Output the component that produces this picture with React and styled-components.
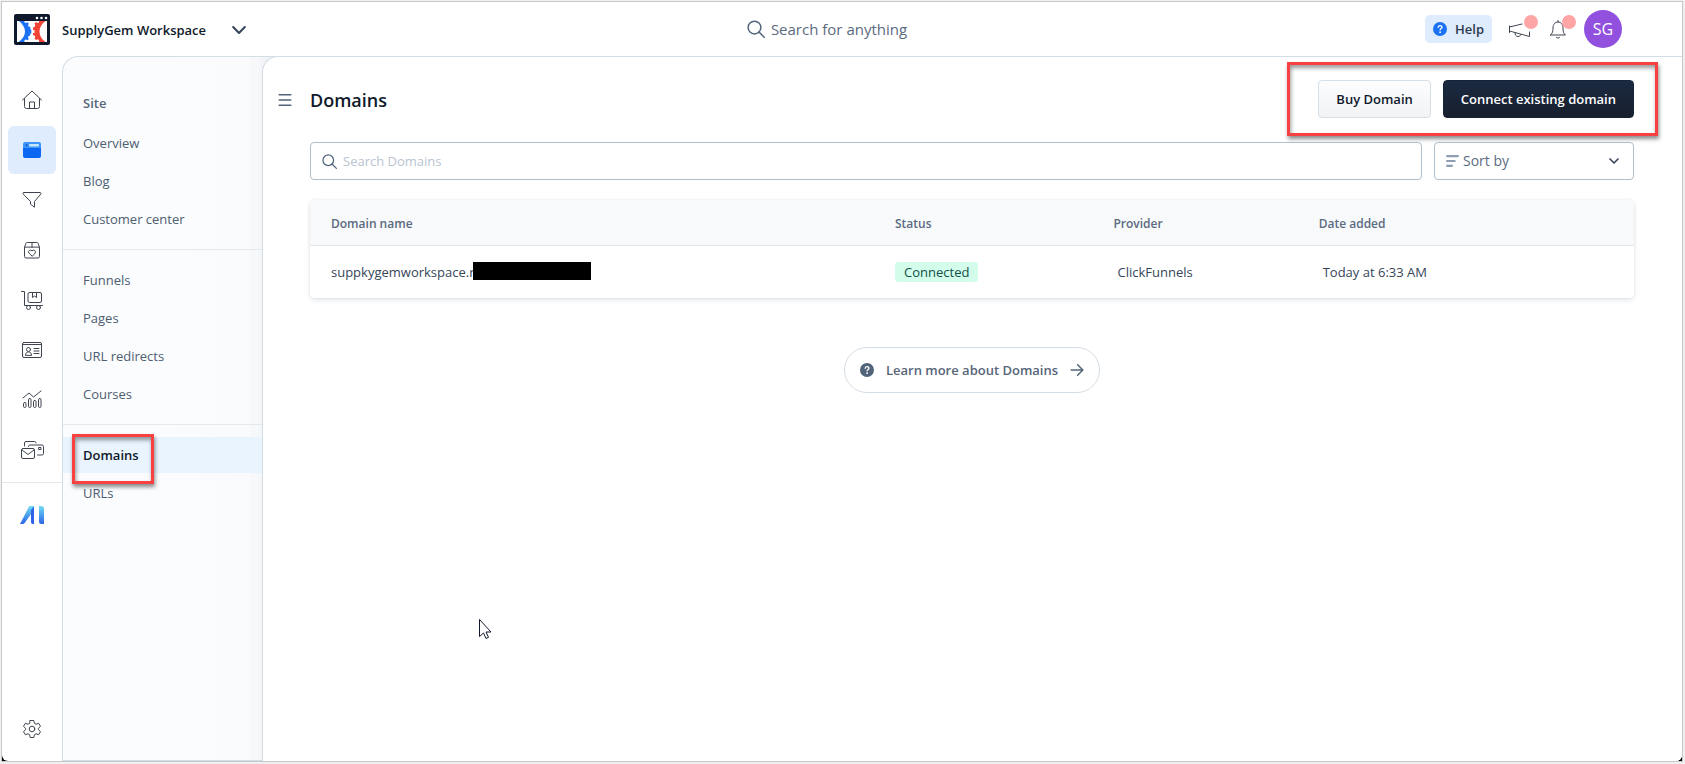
import React from "react";
import styled, { createGlobalStyle } from "styled-components";

const GlobalStyle = createGlobalStyle`
  * {
    box-sizing: border-box;
  }
  body {
    margin: 0;
    background: #f0f0f0;
    color: #364559;
    font-family: "Open Sans", "Noto Sans", sans-serif;
    font-size: 13px;
    line-height: 20px;
  }
  button, input, select {
    font: inherit;
    color: inherit;
  }
  button {
    cursor: pointer;
  }
  a {
    color: inherit;
    text-decoration: none;
  }
  svg {
    display: block;
    flex: none;
  }
`;

const Page = styled.div`
  display: flex;
  min-height: 100vh;
  padding: 1px 2px 2px 1px;
`;

const Frame = styled.div`
  position: relative;
  flex: 1;
  display: flex;
  border: 1px solid #c6c8ca;
  background: #000;
`;

const Window = styled.div`
  flex: 1;
  display: flex;
  flex-direction: column;
  background: #fff;
  border-radius: 0 0 6px 6px;
  overflow: hidden;
`;

const TopBar = styled.header`
  display: flex;
  align-items: center;
  height: 54px;
  padding: 0 60px 0 12px;
`;

const TopLeft = styled.div`
  flex: 1;
  display: flex;
  align-items: center;
  padding-top: 2px;
`;

const WorkspaceButton = styled.button`
  display: flex;
  align-items: center;
  gap: 26px;
  padding: 0 12px;
  border: 0;
  background: none;
  color: #10192b;
  font-weight: 600;
`;

const GlobalSearch = styled.button`
  display: flex;
  align-items: center;
  gap: 6px;
  padding: 0 0 0 18px;
  border: 0;
  background: none;
  color: #5b6b80;
  font-size: 15px;
`;

const TopRight = styled.div`
  flex: 1;
  display: flex;
  align-items: center;
  justify-content: flex-end;
`;

const HelpButton = styled.button`
  display: flex;
  align-items: center;
  gap: 8px;
  height: 28px;
  margin-right: 16px;
  padding: 0 8px;
  border: 0;
  border-radius: 5px;
  background: #deecfd;
  color: #2b3a50;
  font-weight: 600;
`;

const IconButton = styled.button`
  position: relative;
  display: flex;
  align-items: center;
  justify-content: center;
  width: 24px;
  height: 28px;
  margin-right: 14px;
  padding: 0;
  border: 0;
  background: none;
`;

const Dot = styled.span`
  position: absolute;
  top: 0;
  right: -6px;
  width: 14px;
  height: 14px;
  border-radius: 50%;
  background: #ffa5a5;
`;

const Avatar = styled.button`
  width: 38px;
  height: 38px;
  padding: 0;
  border: 0;
  border-radius: 50%;
  background: #9150dd;
  color: #fff;
  font-size: 16px;
`;

const Body = styled.div`
  flex: 1;
  display: flex;
`;

const Rail = styled.nav`
  display: flex;
  flex-direction: column;
  gap: 2px;
  width: 60px;
  padding: 20px 0 8px;
`;

const RailLink = styled.a`
  display: flex;
  align-items: center;
  justify-content: center;
  height: 48px;
  margin: 0 6px;
  border-radius: 6px;
  background: ${(props) => (props.$active ? "#deecfd" : "transparent")};
`;

const RailDivider = styled.hr`
  width: 100%;
  margin: 6px 0;
  border: 0;
  border-top: 1px solid #e1e8ee;
`;

const RailBottom = styled.div`
  margin-top: auto;
`;

const Shell = styled.div`
  flex: 1;
  display: flex;
  border: 1px solid #d3dde4;
  border-right: 0;
  border-radius: 16px 0 0 0;
  background: linear-gradient(
    to right,
    #fbfcfd 0,
    #fafbfc 186px,
    #f6f8fa 188px,
    #f6f8fa 195px,
    #f1f3f6 200px
  );
`;

const SideNav = styled.nav`
  width: 199px;
  padding-top: 28px;
`;

const SideTitle = styled.h2`
  margin: 0 0 4px;
  padding: 8px 20px;
  font-size: 13px;
  font-weight: 600;
  line-height: 20px;
  color: #56667b;
`;

const SideGroup = styled.ul`
  display: flex;
  flex-direction: column;
  gap: 2px;
  margin: 0;
  padding: 0 0 12px;
  list-style: none;

  & + & {
    padding-top: 12px;
    border-top: 1px solid #e3e9ee;
  }
`;

const SideItem = styled.li`
  position: relative;
`;

const SideLink = styled.a`
  display: block;
  padding: 8px 20px;
  background: ${(props) => (props.$active ? "#e9f4fe" : "transparent")};
  color: ${(props) => (props.$active ? "#10192b" : "#4d5d72")};
  font-weight: ${(props) => (props.$active ? 600 : 400)};
`;

const Callout = styled.span`
  position: absolute;
  z-index: 1;
  border: 3px solid #f94141;
  box-shadow:
    1px 3px 4px rgba(0, 0, 0, 0.45),
    inset 1px 3px 4px rgba(0, 0, 0, 0.4);
  pointer-events: none;
`;

const SideCallout = styled(Callout)`
  top: -3px;
  bottom: -11px;
  left: 9px;
  width: 82px;
`;

const ActionsCallout = styled(Callout)`
  top: -18px;
  right: -24px;
  bottom: -18px;
  left: -31px;
`;

const Main = styled.main`
  flex: 1;
  margin: -1px 0;
  padding: 23px 48px 40px 15px;
  border: 1px solid #d3dde4;
  border-right: 0;
  border-bottom: 0;
  border-radius: 16px 0 0 0;
  background: #fff;
`;

const PageHead = styled.div`
  display: flex;
  align-items: center;
  gap: 18px;
`;

const MenuButton = styled.button`
  padding: 2px 0 0;
  border: 0;
  background: none;
`;

const Title = styled.h1`
  flex: 1;
  margin: 0;
  padding-top: 2px;
  color: #10192b;
  font-size: 18px;
  font-weight: 600;
  line-height: 28px;
`;

const Actions = styled.div`
  position: relative;
  display: flex;
  gap: 12px;
`;

const Button = styled.button`
  height: 38px;
  padding: 0 17px;
  border: 1px solid ${(props) => (props.$dark ? "#172336" : "#d5dfe8")};
  border-radius: 4px;
  background: ${(props) =>
    props.$dark
      ? "linear-gradient(#1b2a41, #171f2d)"
      : "linear-gradient(#fdfdfe, #f1f3f5)"};
  color: ${(props) => (props.$dark ? "#fff" : "#10192b")};
  font-weight: 600;
`;

const Content = styled.div`
  padding: 24px 0 0 32px;
`;

const Filters = styled.div`
  display: flex;
  gap: 12px;
`;

const Field = styled.label`
  display: flex;
  align-items: center;
  gap: 4px;
  height: 38px;
  padding: 0 11px;
  border: 1px solid #afbfcc;
  border-radius: 4px;
  background: #fff;
`;

const SearchField = styled(Field)`
  flex: 1;
`;

const SortField = styled(Field)`
  width: 200px;
`;

const SearchInput = styled.input`
  flex: 1;
  padding: 0 2px;
  border: 0;
  outline: 0;

  &::placeholder {
    color: #b9c4d0;
  }
`;

const SortSelect = styled.select`
  flex: 1;
  appearance: none;
  border: 0;
  outline: 0;
  background: none;
  color: #5b6b80;
  font-size: 14px;
`;

const DomainTable = styled.table`
  width: 100%;
  margin-top: 20px;
  border-spacing: 0;
  table-layout: fixed;
  border-radius: 4px;
  background: #fff;
  box-shadow:
    0 0 3px rgba(30, 50, 80, 0.12),
    0 3px 5px rgba(30, 50, 80, 0.08);
`;

const Th = styled.th`
  width: ${(props) => props.$width};
  height: 46px;
  padding: 2px 21px 0;
  border-bottom: 1px solid #e3e9ef;
  background: #f7f9fb;
  color: #5b6b80;
  font-size: 12px;
  font-weight: 600;
  text-align: left;
`;

const Td = styled.td`
  height: 52px;
  padding: 0 ${(props) => (props.$indent ? "25px" : "21px")};
`;

const DomainLink = styled.a`
  display: flex;
  align-items: center;
`;

const Redacted = styled.span`
  width: 118px;
  height: 18px;
  margin: 0 0 2px -1px;
  background: #000;
`;

const Badge = styled.span`
  display: inline-block;
  padding: 0 9px;
  border-radius: 3px;
  background: #d3fdea;
  color: #12504a;
`;

const LearnRow = styled.div`
  display: flex;
  justify-content: center;
  margin-top: 49px;
`;

const LearnLink = styled.a`
  display: flex;
  align-items: center;
  gap: 12px;
  height: 46px;
  padding: 0 15px;
  border: 1px solid #d5dde4;
  border-radius: 23px;
  color: #566579;
  font-weight: 600;
`;

const Pointer = styled.svg`
  position: absolute;
  top: 616px;
  left: 476px;
`;

const Line = ({ size = 24, width = 1, color = "#3f4550", children }) => (
  <svg
    width={size}
    height={size}
    viewBox="0 0 24 24"
    fill="none"
    stroke={color}
    strokeWidth={width}
    strokeLinecap="round"
    strokeLinejoin="round"
    aria-hidden="true"
  >
    {children}
  </svg>
);

const Logo = () => (
  <svg width="36" height="32" viewBox="0 0 36 32" aria-hidden="true">
    <rect width="36" height="31" rx="2" fill="#10192b" />
    <path d="M3 7h30v21H3z" fill="#fff" />
    <circle cx="23" cy="4" r="1.3" fill="#fff" />
    <circle cx="27.5" cy="4" r="1.3" fill="#fff" />
    <circle cx="32" cy="4" r="1.3" fill="#fff" />
    <path
      d="M5 7h5.500v1.500l1.500.5 1.500-.8 1.300 1.500-.8 1.500.6 1.300 1.700.5v2.500h1v4h-1v2l-1.700.6-.6 1.300.8 1.600-1.300 1.300-1.500-.8-1.500.5V28H4.500c4-3 6.500-6.500 6.500-10.500S8.500 10 5 7z"
      fill="#1c72f5"
    />
    <path
      d="M31.500 7H25v1.500l-1.500.5-1.500-1-1.500 1.500.8 1.700-.8 1.800-1.500.4v2.600h1.500v3H19V21l1.500.5.8 1.500-.8 1.800L22 26l1.500-.8 1.500.8v2h6.500c-4-3-6-6.500-6-10.500s2-7.500 6-10.500z"
      fill="#f24334"
    />
  </svg>
);

const Question = ({ color }) => (
  <svg width="14" height="14" viewBox="0 0 14 14" aria-hidden="true">
    <circle cx="7" cy="7" r="7" fill={color} />
    <path
      d="M5.200 5.300c.1-1 .9-1.600 1.900-1.600 1.100 0 1.900.6 1.900 1.500 0 1.300-1.900 1.300-1.900 2.600"
      fill="none"
      stroke="#fff"
      strokeWidth="1.3"
      strokeLinecap="round"
    />
    <circle cx="7.1" cy="10.2" r=".9" fill="#fff" />
  </svg>
);

const SearchIcon = ({ size, width }) => (
  <Line size={size} width={width} color="#52647a">
    <circle cx="10" cy="10" r="8.5" />
    <path d="m16 16 7 7" />
  </Line>
);

const HomeIcon = () => (
  <Line>
    <path d="M2.500 12 12 3l9.500 9M4.500 10.500v8a2 2 0 0 0 2 2h11a2 2 0 0 0 2-2v-8M9.500 20v-6h5v6" />
  </Line>
);

const BrowserIcon = () => (
  <svg width="18" height="16" viewBox="0 0 18 16" aria-hidden="true">
    <path d="M0 6h18v8a2 2 0 0 1-2 2H2a2 2 0 0 1-2-2z" fill="#0b66f2" />
    <path d="M2 0h14a2 2 0 0 1 2 2v4H0V2a2 2 0 0 1 2-2z" fill="#3d95fb" />
    <circle cx="3.5" cy="3.2" r="1" fill="#0b4fc0" />
    <rect x="6" y="2" width="10" height="2.5" rx="1" fill="#c5e6fc" />
  </svg>
);

const FunnelIcon = () => (
  <Line>
    <path d="M4 4.500h16a1 1 0 0 1 .8 1.600L14.500 13.500v5.700l-4-3v-2.700L3.200 6.100a1 1 0 0 1 .8-1.600z" />
  </Line>
);

const ProductIcon = () => (
  <Line>
    <path d="M4.500 9.500v9a1.500 1.500 0 0 0 1.500 1.500h12a1.500 1.500 0 0 0 1.500-1.500v-9zM4.500 9.500l1.300-4a1.500 1.500 0 0 1 1.400-1h9.600a1.500 1.500 0 0 1 1.400 1l1.300 4M12 4.500v5" />
    <path d="m12 18-3.200-3a1.800 1.800 0 0 1 3.200-2 1.800 1.800 0 0 1 3.200 2z" />
  </Line>
);

const CartIcon = () => (
  <Line>
    <path d="M1.500 3.500h3v14h18" />
    <rect x="8" y="4.5" width="13.5" height="10" rx="1.5" />
    <path d="M12.500 4.500v5l2-1.500 2 1.500v-5" />
    <circle cx="8.5" cy="19.5" r="2" />
    <circle cx="18.5" cy="19.5" r="2" />
  </Line>
);

const ContactIcon = () => (
  <Line>
    <rect x="2.5" y="4.5" width="19" height="15" rx="1.5" />
    <path d="M2.500 6.500h19M14 10.500h5M14 13h5M14 15.500h5M5.500 17c0-2 1.300-3 3-3s3 1 3 3z" />
    <circle cx="8.5" cy="11.5" r="2" />
  </Line>
);

const ChartIcon = () => (
  <Line>
    <path d="m3 10 6-5 4.500 4 2.500-2 5-4" />
    <rect x="3.5" y="14.5" width="2.5" height="5" rx="1.2" />
    <rect x="8.5" y="10.5" width="2.5" height="9" rx="1.2" />
    <rect x="13.5" y="12.5" width="2.5" height="7" rx="1.2" />
    <rect x="18.5" y="10.5" width="2.5" height="9" rx="1.2" />
  </Line>
);

const MailIcon = () => (
  <Line>
    <rect x="1.5" y="10.5" width="13" height="10" rx="1.5" />
    <path d="m2 12 6 4.500 6-4.500M4.500 8V5a1.500 1.500 0 0 1 1.500-1.500h8.500a1.500 1.500 0 0 1 1.500 1.300" />
    <path d="M8.500 8.500c0-1 .7-1.500 1.500-1.500h12a1.500 1.500 0 0 1 1.500 1.500v7a1.500 1.500 0 0 1-1.500 1.500h-4.500" />
    <path d="M19 9.500h2v2h-2z" />
  </Line>
);

const AiIcon = () => (
  <svg width="24" height="18" viewBox="0 0 24 18" aria-hidden="true">
    <defs>
      <linearGradient id="ai" x1="0" y1="0" x2="0" y2="1">
        <stop offset="0" stopColor="#6fdcf2" />
        <stop offset="1" stopColor="#2c63e8" />
      </linearGradient>
    </defs>
    <path d="M10 0h4v4L5 16.500Q4 18 2.500 18H0L8.500 1.500Q9 0 10 0z" fill="url(#ai)" />
    <path d="M11 4l3-3.500V18h-1.500Q11 18 11 16z" fill="#2c63e8" />
    <path d="M19 0h2q3 0 3 3v15h-2.500Q19 18 19 15.500z" fill="url(#ai)" />
  </svg>
);

const GearIcon = () => (
  <Line>
    <path d="M10.200 3.500h3.600l.6 2.800 1.600.9 2.700-.9 1.800 3.100-2.100 1.900v1.400l2.100 1.900-1.800 3.100-2.700-.9-1.600.9-.6 2.800h-3.600l-.6-2.800-1.600-.9-2.700.9-1.800-3.100 2.100-1.900v-1.400L3.500 9.400l1.800-3.100 2.700.9 1.600-.9z" />
    <circle cx="12" cy="12" r="2.8" />
  </Line>
);

const MegaphoneIcon = () => (
  <Line>
    <path d="M1.500 9v6.500M1.500 10 14 7M1.500 14l20 5.500V15M7 15.800c0 2 1 3.700 3 3.700 1.500 0 2.500-.8 3-2" />
  </Line>
);

const BellIcon = () => (
  <Line>
    <path d="M12 3.500v1.500M10.500 20.500c.8.800 2.200.8 3 0M4.500 18h15c-2-1.500-2.500-3.500-2.500-7 0-3.500-2-6-5-6s-5 2.500-5 6c0 3.500-.5 5.500-2.500 7z" />
  </Line>
);

const railLinks = [
  { label: "Home", icon: <HomeIcon /> },
  { label: "Site", icon: <BrowserIcon />, active: true },
  { label: "Funnels", icon: <FunnelIcon /> },
  { label: "Products", icon: <ProductIcon /> },
  { label: "Orders", icon: <CartIcon /> },
  { label: "Contacts", icon: <ContactIcon /> },
  { label: "Analytics", icon: <ChartIcon /> },
  { label: "Marketing", icon: <MailIcon /> },
];

const sideGroups = [
  ["Overview", "Blog", "Customer center"],
  ["Funnels", "Pages", "URL redirects", "Courses"],
  ["Domains", "URLs"],
];

const domains = [
  {
    name: "suppkygemworkspace.r",
    status: "Connected",
    provider: "ClickFunnels",
    added: "Today at 6:33 AM",
  },
];

function Header() {
  return (
    <TopBar>
      <TopLeft>
        <Logo />
        <WorkspaceButton>
          SupplyGem Workspace
          <Line size={14} width={3.5} color="#364559">
            <path d="m2 7 10 10L22 7" />
          </Line>
        </WorkspaceButton>
      </TopLeft>
      <GlobalSearch>
        <SearchIcon size={18} width={2} />
        Search for anything
      </GlobalSearch>
      <TopRight>
        <HelpButton>
          <Question color="#1c72f5" />
          Help
        </HelpButton>
        <IconButton aria-label="Announcements">
          <MegaphoneIcon />
          <Dot />
        </IconButton>
        <IconButton aria-label="Notifications">
          <BellIcon />
          <Dot />
        </IconButton>
        <Avatar>SG</Avatar>
      </TopRight>
    </TopBar>
  );
}

function Navigation() {
  return (
    <SideNav aria-label="Site">
      <SideTitle>Site</SideTitle>
      {sideGroups.map((group) => (
        <SideGroup key={group[0]}>
          {group.map((label) => (
            <SideItem key={label}>
              <SideLink href="#" $active={label === "Domains"}>
                {label}
              </SideLink>
              {label === "Domains" && <SideCallout />}
            </SideItem>
          ))}
        </SideGroup>
      ))}
    </SideNav>
  );
}

function Domains() {
  return (
    <Main>
      <PageHead>
        <MenuButton aria-label="Toggle menu">
          <Line size={14} width={2.5} color="#52647a">
            <path d="M2 3h20M2 12h20M2 21h20" />
          </Line>
        </MenuButton>
        <Title>Domains</Title>
        <Actions>
          <Button>Buy Domain</Button>
          <Button $dark>Connect existing domain</Button>
          <ActionsCallout />
        </Actions>
      </PageHead>
      <Content>
        <Filters>
          <SearchField>
            <SearchIcon size={15} width={2} />
            <SearchInput
              type="text"
              aria-label="Search Domains"
              placeholder="Search Domains"
            />
          </SearchField>
          <SortField>
            <Line size={13} width={4} color="#8d9db2">
              <path d="M2 2h20M2 11h14M2 20h9" />
            </Line>
            <SortSelect aria-label="Sort by">
              <option>Sort by</option>
            </SortSelect>
            <Line size={16} width={2.5} color="#364559">
              <path d="m6 9 6 6 6-6" />
            </Line>
          </SortField>
        </Filters>
        <DomainTable>
          <thead>
            <tr>
              <Th $width="42.6%">Domain name</Th>
              <Th $width="16.5%">Status</Th>
              <Th $width="15.5%">Provider</Th>
              <Th>Date added</Th>
            </tr>
          </thead>
          <tbody>
            {domains.map((domain) => (
              <tr key={domain.name}>
                <Td>
                  <DomainLink href="#">
                    {domain.name}
                    <Redacted />
                  </DomainLink>
                </Td>
                <Td>
                  <Badge>{domain.status}</Badge>
                </Td>
                <Td $indent>{domain.provider}</Td>
                <Td $indent>{domain.added}</Td>
              </tr>
            ))}
          </tbody>
        </DomainTable>
        <LearnRow>
          <LearnLink href="#">
            <Question color="#52647a" />
            Learn more about Domains
            <Line size={14} width={2.5} color="#52647a">
              <path d="M2 12h20M13 3l9 9-9 9" />
            </Line>
          </LearnLink>
        </LearnRow>
      </Content>
    </Main>
  );
}

export default function App() {
  return (
    <Page>
      <GlobalStyle />
      <Frame>
        <Window>
          <Header />
          <Body>
            <Rail aria-label="Main">
              {railLinks.map((link) => (
                <RailLink
                  key={link.label}
                  href="#"
                  aria-label={link.label}
                  $active={link.active}
                >
                  {link.icon}
                </RailLink>
              ))}
              <RailDivider />
              <RailLink href="#" aria-label="AI">
                <AiIcon />
              </RailLink>
              <RailBottom>
                <RailLink href="#" aria-label="Settings">
                  <GearIcon />
                </RailLink>
              </RailBottom>
            </Rail>
            <Shell>
              <Navigation />
              <Domains />
            </Shell>
          </Body>
        </Window>
        <Pointer width="16" height="24" viewBox="0 0 16 24" aria-hidden="true">
          <path
            d="M1.500 1.500v17l4-3.500 2.500 5.500 2.500-1.200-2.500-5.300h5z"
            fill="#fff"
            stroke="#10192b"
          />
        </Pointer>
      </Frame>
    </Page>
  );
}
